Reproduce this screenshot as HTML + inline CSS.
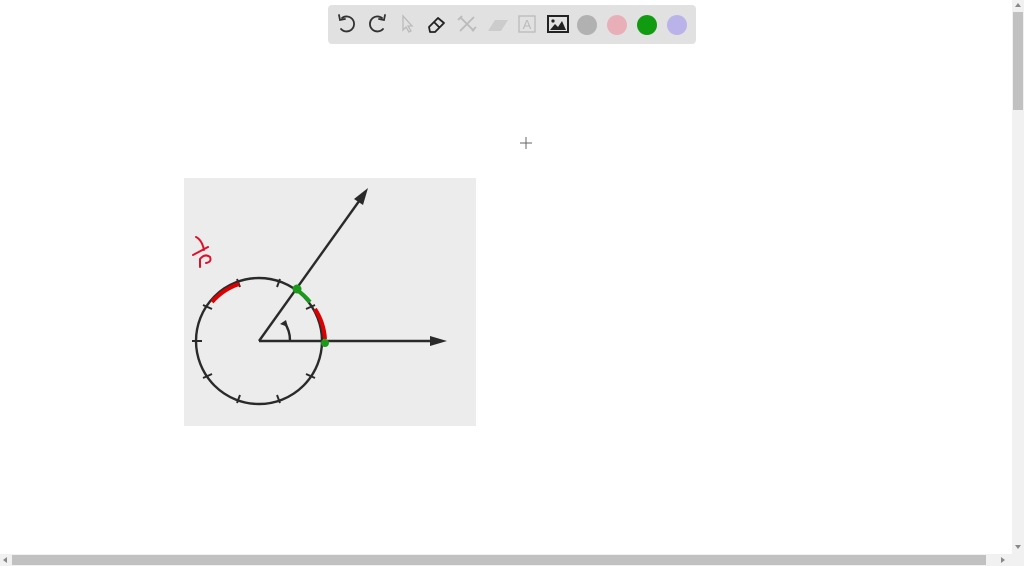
<!DOCTYPE html>
<html><head><meta charset="utf-8"><style>
html,body{margin:0;padding:0;width:1024px;height:566px;overflow:hidden;background:#fff;font-family:"Liberation Sans",sans-serif}
.tb{position:absolute;left:328px;top:5px;width:368px;height:39px;background:#e1e1e1;border-radius:4px}
</style></head><body>
<div class="tb"></div>
<svg width="1024" height="566" style="position:absolute;left:0;top:0">
<g fill="none" stroke="#333" stroke-width="1.8" stroke-linecap="round">
<path d="M342 18 A7.5 7.5 0 1 1 341 29"/><path d="M339 15 L340 20 L345 19"/>
<path d="M382 18 A7.5 7.5 0 1 0 383 29"/><path d="M385 15 L384 20 L379 19"/>
</g>
<path d="M403 16 L403 30 L406 27 L409 32 L411 31 L408 26 L412 26 Z" fill="none" stroke="#bbb" stroke-width="1.3"/>
<path d="M429 27 L438 18 L444 23 L435 32 L430 32 Z M434 22 L440 28" fill="none" stroke="#222" stroke-width="1.8" stroke-linejoin="round"/>
<g stroke="#bbb" stroke-width="1.8" fill="none"><path d="M460 17 L474 31 M474 17 L460 31 M458 20 L462 16 M472 31 L476 27"/></g>
<path d="M488 31 L495 20 L508 20 L501 31 Z" fill="#ccc"/>
<rect x="519" y="16" width="16" height="16" fill="none" stroke="#bbb" stroke-width="1.3"/>
<text x="527" y="29" font-size="13" fill="#bbb" text-anchor="middle">A</text>
<rect x="548" y="16" width="20" height="16" fill="none" stroke="#222" stroke-width="2"/>
<path d="M550 30 L555 24 L558 27 L562 21 L566 30 Z" fill="#222"/><circle cx="553" cy="21" r="1.6" fill="#222"/>
<circle cx="587" cy="25" r="10" fill="#b1b1b1"/>
<circle cx="617" cy="25" r="10" fill="#e9afb8"/>
<circle cx="647" cy="25" r="10" fill="#109b10"/>
<circle cx="677" cy="25" r="10" fill="#b9b3ea"/>
<path d="M526 137 V149 M520 143 H532" stroke="#666" stroke-width="1"/>
<rect x="184" y="178" width="292" height="248" fill="#ececec"/>
<g stroke="#2a2a2a" stroke-width="2.4" fill="none">
<circle cx="259" cy="341" r="63"/>
<path d="M259 341 L440 341"/><path d="M259 341 L362 197"/>
<path d="M290 341 A31 31 0 0 0 284 322"/>
</g>
<path d="M286 320 L280 324 L288 327 Z" fill="#2a2a2a"/>
<path d="M447 341 L430 336 L430 346 Z" fill="#2a2a2a"/>
<path d="M368 188 L354 199 L363 205 Z" fill="#2a2a2a"/>
<g stroke="#2a2a2a" stroke-width="2">
<path d="M192 341 H202"/><path d="M237 279 L240 287"/><path d="M280 279 L277 287"/>
<path d="M203 305 L212 309"/><path d="M203 378 L212 374"/><path d="M237 403 L240 395"/>
<path d="M280 403 L277 395"/><path d="M315 378 L306 374"/><path d="M315 305 L306 309"/>
</g>
<path d="M212 302 A63 63 0 0 1 239 284" stroke="#d00" stroke-width="4" fill="none"/>
<path d="M315 309 A63 63 0 0 1 325 339" stroke="#d00" stroke-width="4" fill="none"/>
<path d="M297 290 A63 63 0 0 1 310 302" stroke="#1a9a1a" stroke-width="4" fill="none"/>
<circle cx="297" cy="289" r="4.5" fill="#1a9a1a"/><circle cx="325" cy="343" r="4" fill="#1a9a1a"/>
<g stroke="#e0102a" stroke-width="2" fill="none" stroke-linecap="round">
<path d="M196 237 Q202 240 204 250"/><path d="M193 255 L208 247"/>
<path d="M200 267 L200 259 Q205 253 210 257 Q212 262 206 263"/>
</g>
<rect x="1012" y="0" width="12" height="554" fill="#f1f1f1"/>
<rect x="1013" y="12" width="10" height="98" fill="#c1c1c1"/>
<rect x="0" y="554" width="1024" height="12" fill="#f1f1f1"/>
<rect x="12" y="555" width="974" height="10" fill="#c1c1c1"/>
<path d="M1015 7 L1018 3 L1021 7 Z M1015 545 L1021 545 L1018 549 Z M7 557 L3 560 L7 563 Z M1001 557 L1005 560 L1001 563 Z" fill="#888"/>
</svg>
</body></html>
